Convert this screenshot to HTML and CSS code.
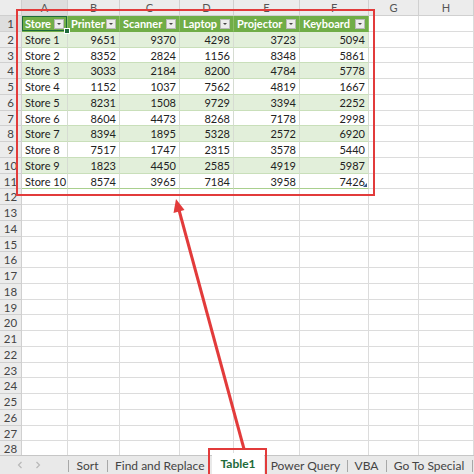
FILE: index.html
```html
<!DOCTYPE html>
<html>
<head>
<meta charset="utf-8">
<link rel="stylesheet" href="styles.css">
</head>
<body>
<div class="app">
  <div class="sheet">
    <div class="r hdr">
      <div class="corner"></div>
      <div class="ch selh">A</div><div class="ch">B</div><div class="ch">C</div><div class="ch">D</div><div class="ch">E</div><div class="ch">F</div><div class="ch">G</div><div class="ch">H</div>
    </div>
    <div class="r head">
      <div class="rh selh">1</div>
      <div class="th sel">Store<span class="dd"></span></div>
      <div class="th">Printer<span class="dd"></span></div>
      <div class="th">Scanner<span class="dd"></span></div>
      <div class="th">Laptop<span class="dd"></span></div>
      <div class="th">Projector<span class="dd"></span></div>
      <div class="th">Keyboard<span class="dd"></span></div>
      <div class="c"></div><div class="c"></div>
    </div>
    <div class="r odd"><div class="rh">2</div><div class="x">Store 1</div><div class="x n">9651</div><div class="x n">9370</div><div class="x n">4298</div><div class="x n">3723</div><div class="x n">5094</div><div class="c"></div><div class="c"></div></div>
    <div class="r"><div class="rh">3</div><div class="x">Store 2</div><div class="x n">8352</div><div class="x n">2824</div><div class="x n">1156</div><div class="x n">8348</div><div class="x n">5861</div><div class="c"></div><div class="c"></div></div>
    <div class="r odd"><div class="rh">4</div><div class="x">Store 3</div><div class="x n">3033</div><div class="x n">2184</div><div class="x n">8200</div><div class="x n">4784</div><div class="x n">5778</div><div class="c"></div><div class="c"></div></div>
    <div class="r"><div class="rh">5</div><div class="x">Store 4</div><div class="x n">1152</div><div class="x n">1037</div><div class="x n">7562</div><div class="x n">4819</div><div class="x n">1667</div><div class="c"></div><div class="c"></div></div>
    <div class="r odd"><div class="rh">6</div><div class="x">Store 5</div><div class="x n">8231</div><div class="x n">1508</div><div class="x n">9729</div><div class="x n">3394</div><div class="x n">2252</div><div class="c"></div><div class="c"></div></div>
    <div class="r"><div class="rh">7</div><div class="x">Store 6</div><div class="x n">8604</div><div class="x n">4473</div><div class="x n">8268</div><div class="x n">7178</div><div class="x n">2998</div><div class="c"></div><div class="c"></div></div>
    <div class="r odd"><div class="rh">8</div><div class="x">Store 7</div><div class="x n">8394</div><div class="x n">1895</div><div class="x n">5328</div><div class="x n">2572</div><div class="x n">6920</div><div class="c"></div><div class="c"></div></div>
    <div class="r"><div class="rh">9</div><div class="x">Store 8</div><div class="x n">7517</div><div class="x n">1747</div><div class="x n">2315</div><div class="x n">3578</div><div class="x n">5440</div><div class="c"></div><div class="c"></div></div>
    <div class="r odd"><div class="rh">10</div><div class="x">Store 9</div><div class="x n">1823</div><div class="x n">4450</div><div class="x n">2585</div><div class="x n">4919</div><div class="x n">5987</div><div class="c"></div><div class="c"></div></div>
    <div class="r last"><div class="rh">11</div><div class="x">Store 10</div><div class="x n">8574</div><div class="x n">3965</div><div class="x n">7184</div><div class="x n">3958</div><div class="x n rz">7426</div><div class="c"></div><div class="c"></div></div>
    <div class="r"><div class="rh">12</div><div class="c"></div><div class="c"></div><div class="c"></div><div class="c"></div><div class="c"></div><div class="c"></div><div class="c"></div><div class="c"></div></div>
    <div class="r"><div class="rh">13</div><div class="c"></div><div class="c"></div><div class="c"></div><div class="c"></div><div class="c"></div><div class="c"></div><div class="c"></div><div class="c"></div></div>
    <div class="r"><div class="rh">14</div><div class="c"></div><div class="c"></div><div class="c"></div><div class="c"></div><div class="c"></div><div class="c"></div><div class="c"></div><div class="c"></div></div>
    <div class="r"><div class="rh">15</div><div class="c"></div><div class="c"></div><div class="c"></div><div class="c"></div><div class="c"></div><div class="c"></div><div class="c"></div><div class="c"></div></div>
    <div class="r"><div class="rh">16</div><div class="c"></div><div class="c"></div><div class="c"></div><div class="c"></div><div class="c"></div><div class="c"></div><div class="c"></div><div class="c"></div></div>
    <div class="r"><div class="rh">17</div><div class="c"></div><div class="c"></div><div class="c"></div><div class="c"></div><div class="c"></div><div class="c"></div><div class="c"></div><div class="c"></div></div>
    <div class="r"><div class="rh">18</div><div class="c"></div><div class="c"></div><div class="c"></div><div class="c"></div><div class="c"></div><div class="c"></div><div class="c"></div><div class="c"></div></div>
    <div class="r"><div class="rh">19</div><div class="c"></div><div class="c"></div><div class="c"></div><div class="c"></div><div class="c"></div><div class="c"></div><div class="c"></div><div class="c"></div></div>
    <div class="r"><div class="rh">20</div><div class="c"></div><div class="c"></div><div class="c"></div><div class="c"></div><div class="c"></div><div class="c"></div><div class="c"></div><div class="c"></div></div>
    <div class="r"><div class="rh">21</div><div class="c"></div><div class="c"></div><div class="c"></div><div class="c"></div><div class="c"></div><div class="c"></div><div class="c"></div><div class="c"></div></div>
    <div class="r"><div class="rh">22</div><div class="c"></div><div class="c"></div><div class="c"></div><div class="c"></div><div class="c"></div><div class="c"></div><div class="c"></div><div class="c"></div></div>
    <div class="r"><div class="rh">23</div><div class="c"></div><div class="c"></div><div class="c"></div><div class="c"></div><div class="c"></div><div class="c"></div><div class="c"></div><div class="c"></div></div>
    <div class="r"><div class="rh">24</div><div class="c"></div><div class="c"></div><div class="c"></div><div class="c"></div><div class="c"></div><div class="c"></div><div class="c"></div><div class="c"></div></div>
    <div class="r"><div class="rh">25</div><div class="c"></div><div class="c"></div><div class="c"></div><div class="c"></div><div class="c"></div><div class="c"></div><div class="c"></div><div class="c"></div></div>
    <div class="r"><div class="rh">26</div><div class="c"></div><div class="c"></div><div class="c"></div><div class="c"></div><div class="c"></div><div class="c"></div><div class="c"></div><div class="c"></div></div>
    <div class="r"><div class="rh">27</div><div class="c"></div><div class="c"></div><div class="c"></div><div class="c"></div><div class="c"></div><div class="c"></div><div class="c"></div><div class="c"></div></div>
    <div class="r"><div class="rh">28</div><div class="c"></div><div class="c"></div><div class="c"></div><div class="c"></div><div class="c"></div><div class="c"></div><div class="c"></div><div class="c"></div></div>
  </div>
  <div class="tabs">
    <div class="nav">
      <svg width="6" height="8" viewBox="0 0 6 8"><path d="M4.5 1 L1.5 4 L4.5 7" fill="none" stroke="#b8b8b8" stroke-width="1.2"/></svg>
      <svg width="6" height="8" viewBox="0 0 6 8"><path d="M1.5 1 L4.5 4 L1.5 7" fill="none" stroke="#b8b8b8" stroke-width="1.2"/></svg>
    </div>
    <div class="tab sep">Sort</div>
    <div class="tab sep w-find">Find and Replace</div>
    <div class="tab active">Table1</div>
    <div class="tab w-pq">Power Query</div>
    <div class="tab sep w-vba">VBA</div>
    <div class="tab sep w-go">Go To Special</div>
    <div class="tab sep w-end"></div>
  </div>
  <svg class="notes" width="474" height="474" viewBox="0 0 474 474">
    <rect x="17" y="10" width="357" height="185" fill="none" stroke="#e23b3b" stroke-width="2"/>
    <rect x="209" y="449" width="57" height="27" fill="none" stroke="#e23b3b" stroke-width="2"/>
    <line x1="244" y1="449" x2="179" y2="210" stroke="#e23b3b" stroke-width="3"/>
    <polygon points="176,199 184.5,210 173.5,213" fill="#e23b3b"/>
  </svg>
</div>
</body>
</html>
```

FILE: styles.css
```css
html, body {
  margin: 0;
  padding: 0;
  background: #fff;
}

.app {
  position: relative;
  width: 474px;
  height: 474px;
  overflow: hidden;
  display: flex;
  flex-direction: column;
  font-family: Lato, "Liberation Sans", sans-serif;
  font-size: 11px;
  color: #222;
}

.sheet {
  height: 455px;
  flex: none;
  overflow: hidden;
}

.r {
  display: grid;
  grid-template-columns: 22px 46px 52px 60px 54px 66px 69px 50px 55px;
  height: 15.75px;
}

.r > div {
  box-sizing: border-box;
  border-right: 1px solid #dcdcdc;
  border-bottom: 1px solid #dcdcdc;
  white-space: nowrap;
  overflow: hidden;
  line-height: 15px;
}

.r.hdr {
  height: 16px;
}

.corner {
  background: #ececec;
  border-color: #cfcfcf !important;
}

.ch {
  background: #ececec;
  color: #555;
  text-align: center;
  border-color: #d0d0d0 !important;
}

.rh {
  background: #ececec;
  color: #444;
  text-align: center;
  font-size: 11.5px;
  border-color: #d0d0d0 !important;
}

.selh {
  background: #dedede;
}

.th {
  position: relative;
  background: #70ad47;
  color: #fff;
  font-weight: 700;
  padding-left: 3px;
  border-right-color: #8cbf68 !important;
  border-bottom-color: #70ad47 !important;
  overflow: visible !important;
}

.th.sel {
  box-shadow: inset 0 0 0 1px #1e6b3a;
}

.th.sel::after {
  content: "";
  position: absolute;
  right: -3px;
  bottom: -3px;
  width: 4px;
  height: 4px;
  background: #1e6b3a;
  border: 1px solid #fff;
  z-index: 2;
}

.dd {
  position: absolute;
  right: 3px;
  top: 3px;
  width: 8px;
  height: 8px;
  background: #ececec;
  border: 1px solid #b8b8b8;
}

.dd::after {
  content: "";
  position: absolute;
  left: 2px;
  top: 3px;
  border-left: 2px solid transparent;
  border-right: 2px solid transparent;
  border-top: 2.5px solid #444;
}

.x {
  padding: 0 3px;
  border-right-color: #d6dcd2 !important;
  border-bottom-color: #c9dfba !important;
  position: relative;
}

.odd .x {
  background: #e2efda;
}

.last .x {
  border-bottom-color: #a9d08e !important;
}

.n {
  text-align: right;
}

.rz::after {
  content: "";
  position: absolute;
  right: 1px;
  bottom: 1px;
  border-left: 4px solid transparent;
  border-bottom: 4px solid #3b5a8a;
}

.tabs {
  flex: 1;
  display: flex;
  align-items: stretch;
  background: #e9e9e9;
  border-top: 1px solid #c6c6c6;
  font-size: 12px;
  color: #444;
}

.nav {
  flex: none;
  width: 68px;
  display: flex;
  align-items: center;
  gap: 12px;
  padding-left: 17px;
  box-sizing: border-box;
}

.tab {
  flex: none;
  position: relative;
  display: flex;
  align-items: center;
  justify-content: center;
  width: 39px;
  white-space: nowrap;
}

.tab.sep::before {
  content: "";
  position: absolute;
  left: 0;
  top: 4px;
  height: 12px;
  width: 1px;
  background: #a8a8a8;
}

.w-find {
  width: 105px;
  justify-content: flex-start;
  padding-left: 8px;
  box-sizing: border-box;
}

.active {
  width: 52px;
  margin-top: -3px;
  background: #fff;
  color: #1e6b3a;
  font-weight: 700;
}

.w-pq {
  width: 83px;
}

.w-vba {
  width: 39px;
}

.w-go {
  width: 86px;
}

.w-end {
  width: 2px;
}

.notes {
  position: absolute;
  left: 0;
  top: 0;
  pointer-events: none;
}
```
